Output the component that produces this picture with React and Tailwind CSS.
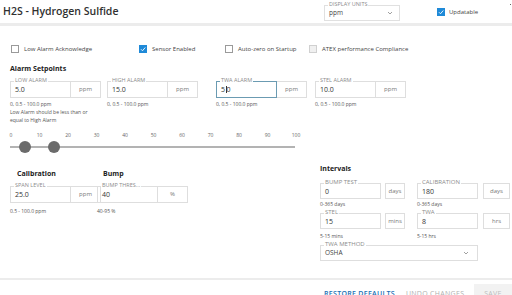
import React from 'react';

const ticks = [0, 10, 20, 30, 40, 50, 60, 70, 80, 90, 100];
const thumbs = [5, 15];
const pos = (v) => 11 + v * 2.85;

function Check({ checked, disabled }) {
    if (checked) {
        return (
            <span className="flex h-[8px] w-[8px] items-center justify-center bg-[#1f8ad8]">
                <svg width="6" height="6" viewBox="0 0 12 12">
                    <polyline points="2,6.5 5,9.5 10.5,3" fill="none" stroke="white" strokeWidth="1.8" />
                </svg>
            </span>
        );
    }
    return (
        <span className={disabled ? 'h-[8px] w-[8px] border border-[#d0d0d0] bg-[#f0f0f0]' : 'h-[8px] w-[8px] border border-[#9a9a9a] bg-white'} />
    );
}

function Chevron() {
    return (
        <svg width="6" height="4" viewBox="0 0 12 8">
            <polyline points="2,2 6,6 10,2" fill="none" stroke="#777" strokeWidth="1.4" />
        </svg>
    );
}

function Field({ label, value, unit, focused }) {
    return (
        <div className="flex h-[17px] w-[91px]">
            <div className={focused ? 'relative flex flex-1 items-center border border-[#6b9bb2] pl-[4px]' : 'relative flex flex-1 items-center border border-[#dedede] pl-[4px]'}>
                <span className="absolute left-[3px] top-[-4px] bg-white px-[1px] text-[5.5px] leading-none text-[#8c8c8c]">{label}</span>
                <span className="flex items-center text-[7px] leading-none text-[#333]">{value}</span>
            </div>
            <div className="flex w-[30px] items-center justify-center border border-l-0 border-[#dedede] text-[6px] text-[#777]">{unit}</div>
        </div>
    );
}

function IntervalField({ label, value, unit, unitWidth }) {
    return (
        <div className="flex h-[16px]">
            <div className="relative flex w-[61px] items-center border border-[#dedede] pl-[4px]">
                <span className="absolute left-[3px] top-[-5px] bg-white px-[1px] text-[6px] leading-none text-[#8c8c8c]">{label}</span>
                <span className="text-[7px] leading-none text-[#333]">{value}</span>
            </div>
            <div className={unitWidth === 'wide' ? 'ml-[5px] flex w-[27px] items-center justify-center border border-[#dedede] text-[6px] text-[#777]' : 'ml-[4px] flex w-[20px] items-center justify-center border border-[#dedede] text-[6px] text-[#777]'}>{unit}</div>
        </div>
    );
}

function Helper({ children }) {
    return <div className="text-[5px] leading-[8px] text-[#555]">{children}</div>;
}

export default function App() {
    return (
        <div className="h-[295px] w-[512px] overflow-hidden bg-white font-['Open_Sans',sans-serif] text-[#333]">
            {/* header */}
            <div className="flex h-[23px] items-start">
                <h1 className="w-[324px] pl-[3px] pt-[4px] text-[10.5px] font-semibold leading-[14px] text-[#303030]">H2S - Hydrogen Sulfide</h1>
                <div className="relative mt-[5px] flex h-[16px] w-[76px] items-center justify-between border border-[#e0e0e0] px-[4px]">
                    <span className="absolute left-[3px] top-[-4px] bg-white px-[1px] text-[5.5px] leading-none text-[#8c8c8c]">DISPLAY UNITS</span>
                    <span className="text-[6.5px] leading-none text-[#444]">ppm</span>
                    <span className="mr-[2px]"><Chevron /></span>
                </div>
                <div className="ml-[37px] mt-[8px] flex items-center gap-[4px]">
                    <Check checked />
                    <span className="text-[6px] leading-none text-[#444]">Updatable</span>
                </div>
                <span className="ml-auto mr-[1px] mt-[4px] h-[1px] w-[1px] bg-[#666]" />
            </div>
            <div className="h-[3px] bg-[#ececec]" />

            {/* options */}
            <div className="mt-[19px] flex h-[8px] items-center pl-[11px] text-[6px] leading-none text-[#444]">
                <div className="flex w-[128px] items-center gap-[5px]"><Check /><span>Low Alarm Acknowledge</span></div>
                <div className="flex w-[86px] items-center gap-[5px]"><Check checked /><span>Sensor Enabled</span></div>
                <div className="flex w-[84px] items-center gap-[5px]"><Check /><span>Auto-zero on Startup</span></div>
                <div className="flex items-center gap-[5px]"><Check disabled /><span>ATEX performance Compliance</span></div>
            </div>

            {/* alarm setpoints */}
            <h2 className="mt-[11px] pl-[10px] text-[7px] font-bold leading-[10px] text-[#222]">Alarm Setpoints</h2>
            <div className="mt-[7px] flex h-[49px] items-start pl-[10px]">
                <div className="w-[97px]">
                    <Field label="LOW ALARM" value="5.0" unit="ppm" />
                    <div className="mt-[2px]">
                        <Helper>0, 0.5 - 100.0 ppm</Helper>
                        <Helper>Low Alarm should be less than or</Helper>
                        <Helper>equal to High Alarm</Helper>
                    </div>
                </div>
                <div className="w-[109px]">
                    <Field label="HIGH ALARM" value="15.0" unit="ppm" />
                    <div className="mt-[2px]"><Helper>0, 0.5 - 100.0 ppm</Helper></div>
                </div>
                <div className="w-[99px]">
                    <Field label="TWA ALARM" value={<>5<span className="mx-[0.5px] h-[7px] w-[0.6px] bg-[#333]" />0</>} unit="ppm" focused />
                    <div className="mt-[2px]"><Helper>0, 0.5 - 100.0 ppm</Helper></div>
                </div>
                <div>
                    <Field label="STEL ALARM" value="10.0" unit="ppm" />
                    <div className="mt-[2px]"><Helper>0, 0.5 - 100.0 ppm</Helper></div>
                </div>
            </div>

            {/* slider */}
            <div className="relative h-[25px] w-[310px]">
                {ticks.map((t) => (
                    <span key={t} className="absolute top-[3px] -translate-x-1/2 text-[5px] leading-none text-[#666]" style={{ left: pos(t) }}>{t}</span>
                ))}
                <div className="absolute left-[10px] top-[16px] h-[1.5px] w-[285px] bg-[#b3b3b3]" />
                {thumbs.map((v) => (
                    <span key={v} className="absolute top-[11px] h-[12px] w-[12px] rounded-full bg-[#6b6b6b]" style={{ left: pos(v) - 6 }} />
                ))}
            </div>

            {/* calibration / bump / intervals */}
            <div className="flex h-[123px]">
                <div className="flex w-[320px] pt-[14px]">
                    <div className="w-[97px] pl-[10px]">
                        <h2 className="pl-[7px] text-[7px] font-bold leading-[10px] text-[#222]">Calibration</h2>
                        <div className="mt-[7px]"><Field label="SPAN LEVEL" value="25.0" unit="ppm" /></div>
                        <div className="mt-[4px]"><Helper>0.5 - 100.0 ppm</Helper></div>
                    </div>
                    <div>
                        <h2 className="pl-[6px] text-[7px] font-bold leading-[10px] text-[#222]">Bump</h2>
                        <div className="mt-[7px]"><Field label="BUMP THRES..." value="40" unit="%" /></div>
                        <div className="mt-[4px]"><Helper>40-95 %</Helper></div>
                    </div>
                </div>
                <div className="pt-[9px]">
                    <h2 className="text-[7px] font-bold leading-[10px] text-[#222]">Intervals</h2>
                    <div className="mt-[9px] flex">
                        <div className="w-[97px]">
                            <IntervalField label="BUMP TEST" value="0" unit="days" />
                            <div className="mt-[1px]"><Helper>0-365 days</Helper></div>
                        </div>
                        <div>
                            <IntervalField label="CALIBRATION" value="180" unit="days" unitWidth="wide" />
                            <div className="mt-[1px]"><Helper>0-365 days</Helper></div>
                        </div>
                    </div>
                    <div className="mt-[5px] flex">
                        <div className="w-[97px]">
                            <IntervalField label="STEL" value="15" unit="mins" />
                            <div className="mt-[3px]"><Helper>5-15 mins</Helper></div>
                        </div>
                        <div>
                            <IntervalField label="TWA" value="8" unit="hrs" unitWidth="wide" />
                            <div className="mt-[3px]"><Helper>5-15 hrs</Helper></div>
                        </div>
                    </div>
                    <div className="relative mt-[5px] flex h-[16px] w-[158px] items-center justify-between border border-[#dedede] pl-[4px] pr-[8px]">
                        <span className="absolute left-[3px] top-[-5px] bg-white px-[1px] text-[6px] leading-none text-[#8c8c8c]">TWA METHOD</span>
                        <span className="text-[6.5px] leading-none text-[#444]">OSHA</span>
                        <Chevron />
                    </div>
                </div>
            </div>

            {/* footer */}
            <div className="h-[2px] bg-[#ececec]" />
            <div className="flex items-start">
                <span className="ml-[324px] mt-[10px] text-[7px] font-semibold leading-none tracking-[0.3px] text-[#1b6fb5]">RESTORE DEFAULTS</span>
                <span className="ml-[11px] mt-[10px] text-[7px] leading-none tracking-[0.3px] text-[#b0b0b0]">UNDO CHANGES</span>
                <div className="ml-auto mt-[4px] flex h-[20px] w-[38px] justify-center bg-[#f2f2f2] pt-[6px] text-[7px] leading-none tracking-[0.3px] text-[#bdbdbd]">SAVE</div>
            </div>
        </div>
    );
}
